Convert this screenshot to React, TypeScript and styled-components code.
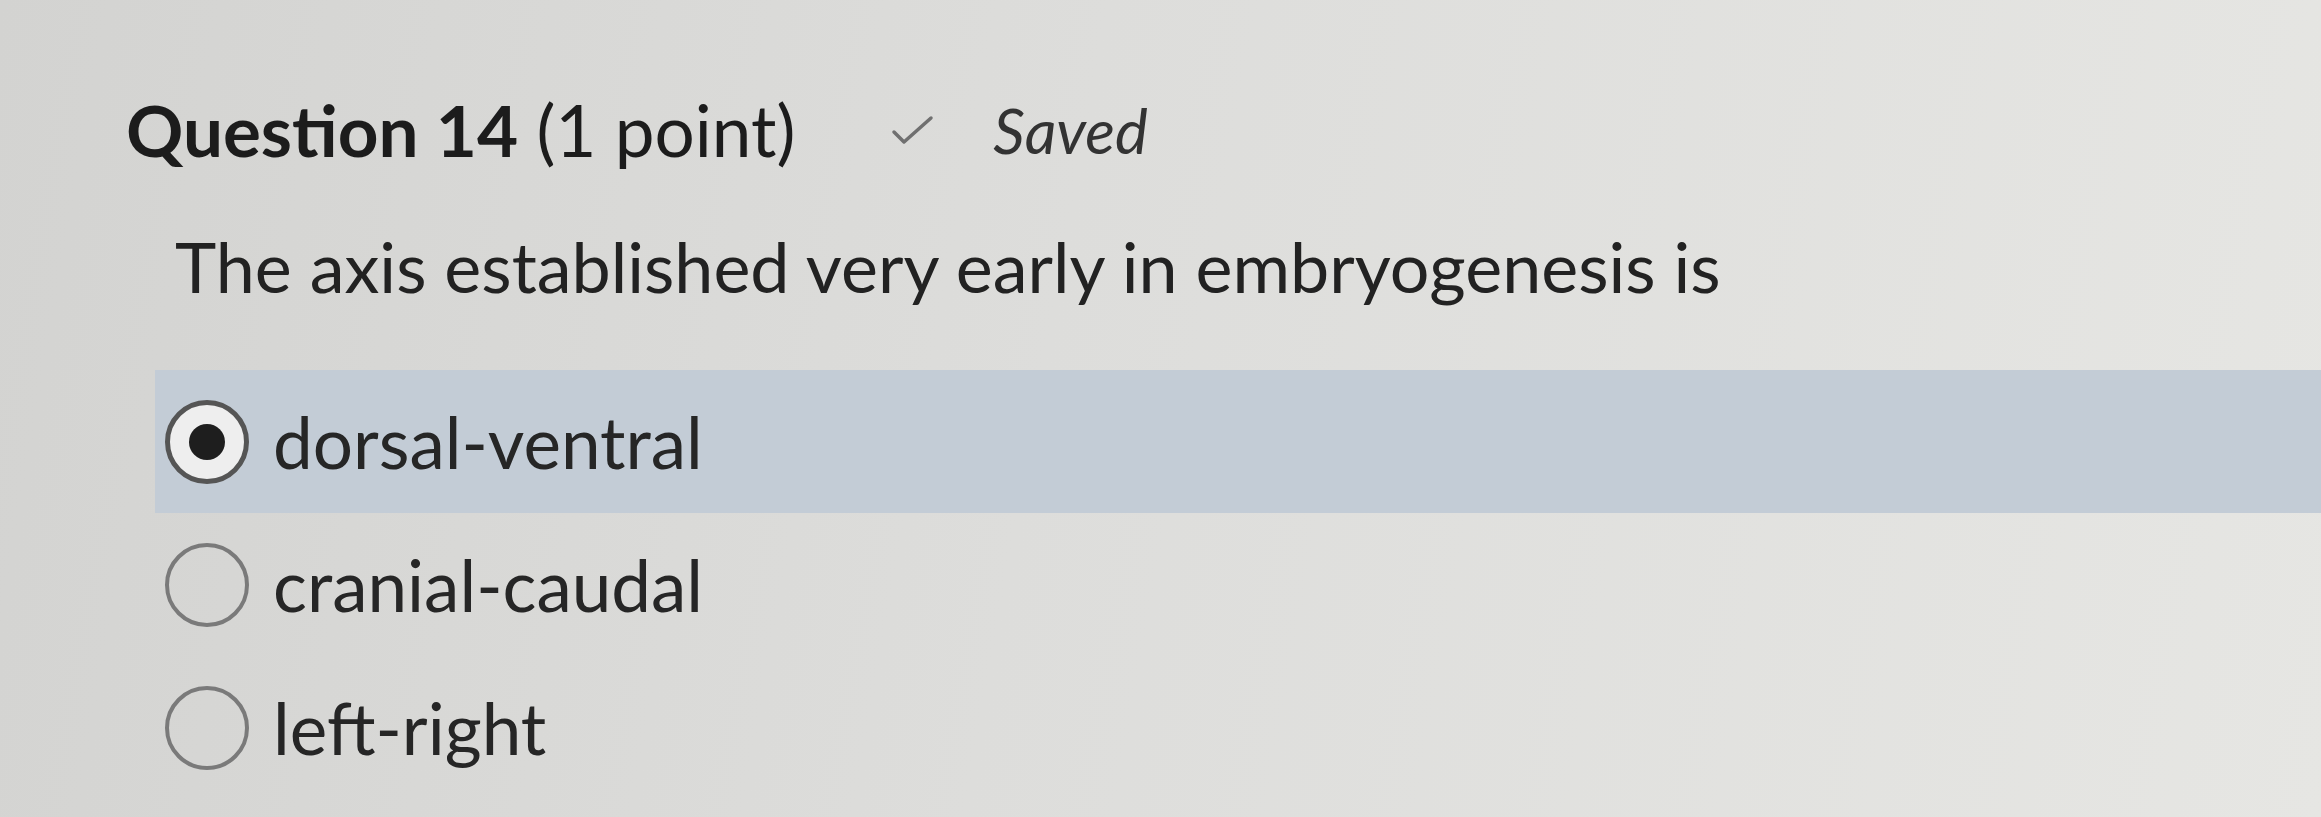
import styled, { createGlobalStyle } from 'styled-components';
import { useState } from 'react';

const options = ['dorsal-ventral', 'cranial-caudal', 'left-right'];

const GlobalStyle = createGlobalStyle`
    html, body {
        margin: 0;
        padding: 0;
    }

    body {
        width: 2321px;
        height: 817px;
        overflow: hidden;
        background: linear-gradient(100deg, #d3d3d1 0%, #dddddb 45%, #e6e6e3 100%);
        font-family: Lato, 'Open Sans', sans-serif;
        color: #222;
    }
`;

const App = () => {
    const [selected, setSelected] = useState(0);

    return (
        <>
            <GlobalStyle />
            <Wrapper>
                <QuestionHeader>
                    <QuestionTitle>
                        <strong>Question 14</strong> (1 point)
                    </QuestionTitle>
                    <SavedStatus>
                        <svg width="46" height="30" viewBox="0 0 46 30">
                            <path
                                d="M5 17 L15 27 L42 3"
                                fill="none"
                                stroke="#707070"
                                strokeWidth="3.5"
                                strokeLinecap="round"
                                strokeLinejoin="round"
                            />
                        </svg>
                        <SavedText>Saved</SavedText>
                    </SavedStatus>
                </QuestionHeader>
                <QuestionText>
                    The axis established very early in embryogenesis is
                </QuestionText>
                <OptionList>
                    {options.map((option, i) => (
                        <OptionRow
                            key={option}
                            $selected={selected === i}
                            onClick={() => setSelected(i)}
                        >
                            <Radio $selected={selected === i} />
                            <OptionLabel>{option}</OptionLabel>
                        </OptionRow>
                    ))}
                </OptionList>
            </Wrapper>
        </>
    );
};

interface SelectedProps {
    $selected: boolean;
}

const Wrapper = styled.div`
    display: flex;
    flex-direction: column;
    padding-top: 90px;
`;

const QuestionHeader = styled.div`
    display: flex;
    align-items: center;
    padding-left: 126px;
`;

const QuestionTitle = styled.div`
    font-size: 71px;
    line-height: 80px;
    font-weight: 400;
    color: #1c1c1c;

    strong {
        font-weight: 700;
    }
`;

const SavedStatus = styled.div`
    display: flex;
    align-items: center;
    margin-left: 94px;
    gap: 58px;
`;

const SavedText = styled.span`
    font-size: 62px;
    font-style: italic;
    color: #333;
`;

const QuestionText = styled.div`
    margin-top: 56px;
    padding-left: 175px;
    font-size: 70px;
    line-height: 80px;
    color: #222;
`;

const OptionList = styled.div`
    display: flex;
    flex-direction: column;
    margin-top: 64px;
    margin-left: 155px;
`;

const OptionRow = styled.div<SelectedProps>`
    display: flex;
    align-items: center;
    height: 143px;
    padding-left: 10px;
    background: ${(props) => (props.$selected ? '#c3ccd6' : 'transparent')};
    cursor: pointer;
`;

const Radio = styled.span<SelectedProps>`
    box-sizing: border-box;
    display: inline-flex;
    align-items: center;
    justify-content: center;
    width: 84px;
    height: 84px;
    border-radius: 50%;
    border: ${(props) => (props.$selected ? '5px solid #555' : '4px solid #7a7a7a')};
    background: ${(props) => (props.$selected ? '#eeeeee' : 'transparent')};

    &::after {
        content: '';
        display: ${(props) => (props.$selected ? 'block' : 'none')};
        width: 36px;
        height: 36px;
        border-radius: 50%;
        background: #1e1e1e;
    }
`;

const OptionLabel = styled.span`
    margin-left: 24px;
    font-size: 71px;
    color: #262626;
`;

export default App;
